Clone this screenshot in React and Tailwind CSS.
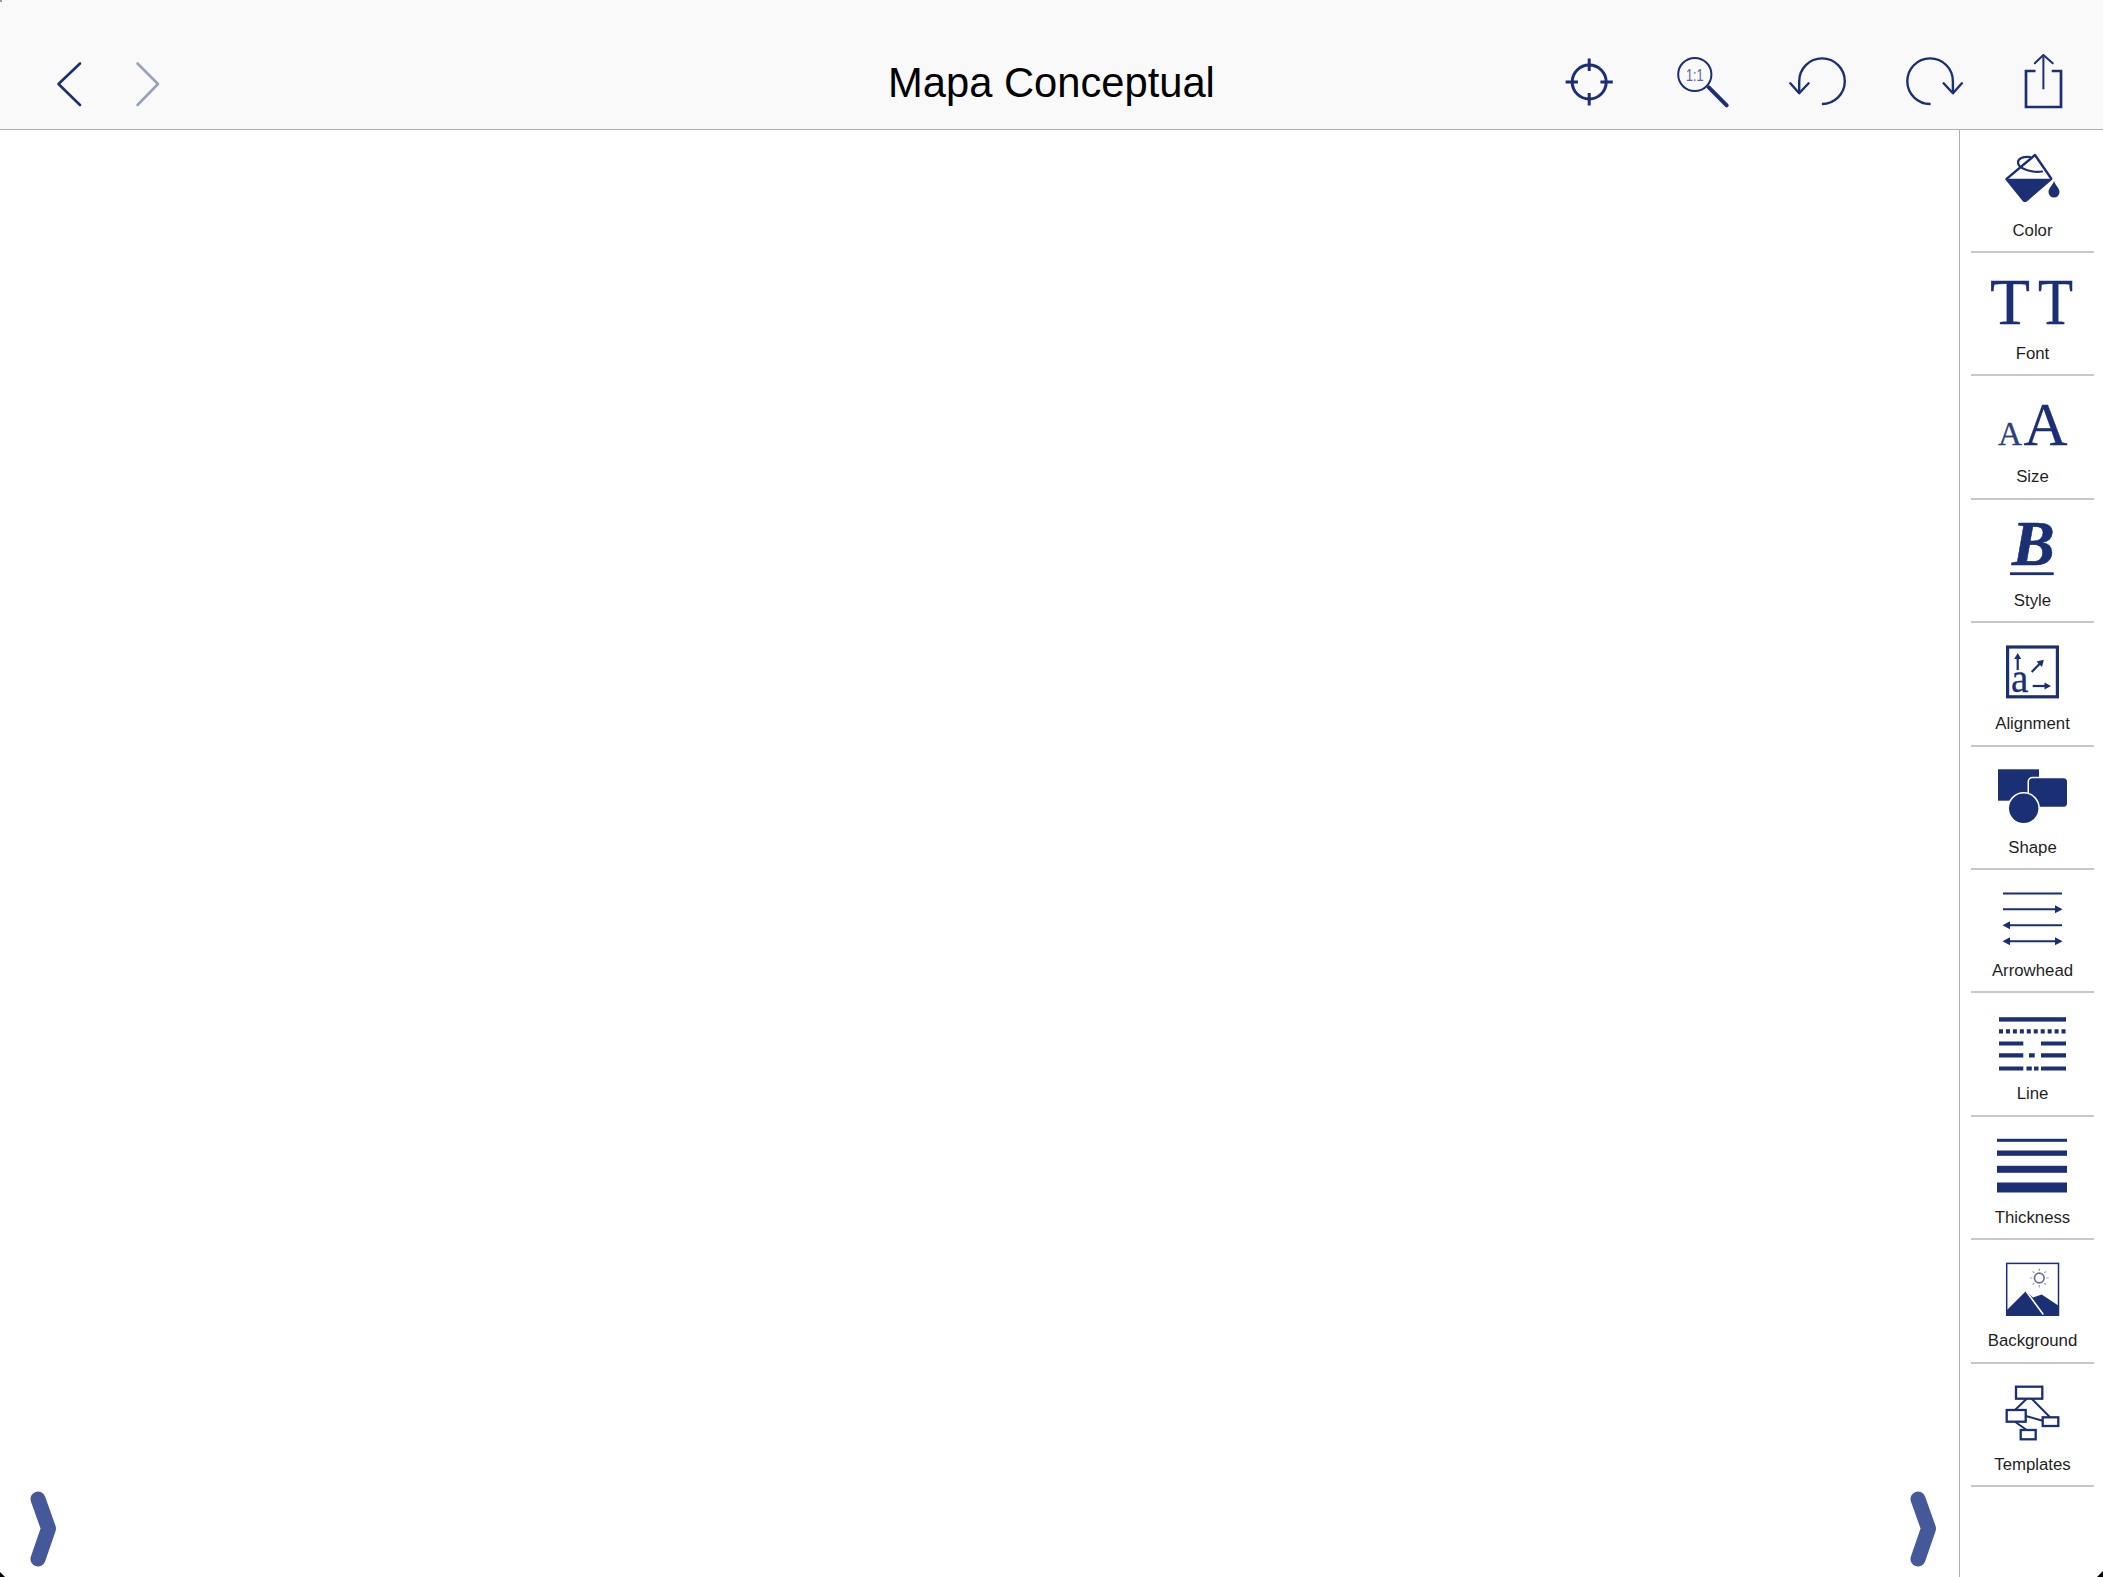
const NAVY = '#1b2f74';

const Icon = ({ children }) => (
  <svg viewBox="0 1 123 89" className="block w-[123px] h-[89px] shrink-0" fill="none">
    {children}
  </svg>
);

const serif = '"Liberation Serif", serif';
const sans = '"Liberation Sans", sans-serif';

const tools = [
  {
    label: 'Color',
    icon: (
      <>
        <path d="M35 50.3 L64 26 L80.7 50.3" stroke={NAVY} strokeWidth="2.4" strokeLinejoin="round" />
        <path d="M35 50.3 H80.7 L55.5 72 Q54 73 52.5 72 Z" fill={NAVY} stroke={NAVY} strokeWidth="1.2" strokeLinejoin="round" />
        <path d="M71 42.5 C62 44 47 40 47 33.5 C47 30 52 27 59 28" stroke={NAVY} strokeWidth="2.2" strokeLinecap="round" />
        <path d="M83 52 C84 56 88.5 59 88.5 63 A5.5 5.5 0 0 1 77.5 63 C77.5 59 82 56 83 52 Z" fill={NAVY} />
      </>
    ),
  },
  {
    label: 'Font',
    icon: (
      <>
        <text x="19" y="72" fontFamily={serif} fontSize="66" fill={NAVY} stroke={NAVY} strokeWidth="0.4" textLength="40" lengthAdjust="spacingAndGlyphs">T</text>
        <text x="67" y="72" fontFamily={serif} fontSize="66" fill={NAVY} stroke={NAVY} strokeWidth="0.4" textLength="35" lengthAdjust="spacingAndGlyphs">T</text>
      </>
    ),
  },
  {
    label: 'Size',
    icon: (
      <>
        <text x="27" y="70" fontFamily={serif} fontSize="33" fill="#2c3e7d" stroke="#2c3e7d" strokeWidth="0.3" textLength="24" lengthAdjust="spacingAndGlyphs">A</text>
        <text x="52.5" y="70" fontFamily={serif} fontSize="61" fill={NAVY} stroke={NAVY} strokeWidth="0.3" textLength="44" lengthAdjust="spacingAndGlyphs">A</text>
      </>
    ),
  },
  {
    label: 'Style',
    icon: (
      <>
        <text x="41" y="66" fontFamily={serif} fontSize="64" fontWeight="700" fontStyle="italic" fill={NAVY} stroke={NAVY} strokeWidth="0.6">B</text>
        <rect x="39" y="73.3" width="43.7" height="2.8" fill={NAVY} />
      </>
    ),
  },
  {
    label: 'Alignment',
    icon: (
      <>
        <rect x="36.6" y="25" width="49.8" height="49.8" stroke={NAVY} strokeWidth="3.2" />
        <text x="40" y="69.5" fontFamily={serif} fontSize="39" fill={NAVY} stroke={NAVY} strokeWidth="0.3">a</text>
        <path d="M46.7 48 V34" stroke={NAVY} strokeWidth="2.2" />
        <path d="M43.2 37 L46.7 31 L50.2 37 Z" fill={NAVY} />
        <path d="M60.7 50 L69.5 41" stroke={NAVY} strokeWidth="2.2" />
        <path d="M65.5 39.5 L72.8 37.7 L71 45 Z" fill={NAVY} />
        <path d="M61.7 64 H75" stroke={NAVY} strokeWidth="2.2" />
        <path d="M73.5 60.5 L80 64 L73.5 67.5 Z" fill={NAVY} />
      </>
    ),
  },
  {
    label: 'Shape',
    icon: (
      <>
        <rect x="27" y="23.3" width="41" height="31.4" fill={NAVY} />
        <rect x="58" y="32.3" width="38" height="28.4" rx="3.5" fill={NAVY} stroke="white" strokeWidth="3" paintOrder="stroke" />
        <circle cx="52.7" cy="62.3" r="14.7" fill={NAVY} stroke="white" strokeWidth="3" paintOrder="stroke" />
      </>
    ),
  },
  {
    label: 'Arrowhead',
    icon: (
      <>
        <path d="M32 24.6 H91 M32 40.3 H87 M36 56.3 H91 M36 72.3 H87" stroke={NAVY} strokeWidth="2" />
        <path d="M84 36.3 L91.5 40.3 L84 44.3 Z M39 52.3 L31.5 56.3 L39 60.3 Z M39 68.3 L31.5 72.3 L39 76.3 Z M84 68.3 L91.5 72.3 L84 76.3 Z" fill={NAVY} />
      </>
    ),
  },
  {
    label: 'Line',
    icon: (
      <>
        <rect x="28" y="25.2" width="67" height="4.4" fill={NAVY} />
        <path d="M28 39.4 H95" stroke={NAVY} strokeWidth="4.2" strokeDasharray="4 2.95" />
        <path d="M28 51.5 H52.3 M70 51.5 H95 M28 63.3 H52.3 M58 63.3 H63.7 M70 63.3 H95 M28 76.5 H52.3 M55.5 76.5 H60.8 M63 76.5 H67.5 M70 76.5 H95" stroke={NAVY} strokeWidth="4.2" />
      </>
    ),
  },
  {
    label: 'Thickness',
    icon: (
      <>
        <rect x="26" y="22.8" width="70" height="3" fill={NAVY} />
        <rect x="26" y="34.5" width="70" height="5.3" fill={NAVY} />
        <rect x="26" y="49.8" width="70" height="7" fill={NAVY} />
        <rect x="26" y="66.5" width="70" height="10" fill={NAVY} />
      </>
    ),
  },
  {
    label: 'Background',
    icon: (
      <>
        <rect x="35.7" y="24.4" width="51.8" height="51.8" stroke={NAVY} strokeWidth="1.5" />
        <circle cx="68.3" cy="39" r="4.8" stroke="#5f70a3" strokeWidth="1.7" />
        <path d="M68.3 29.5 V32 M68.3 46 V48.5 M58.8 39 H61.3 M75.3 39 H77.8 M61.6 32.3 L63.3 34 M73.3 44 L75 45.7 M75 32.3 L73.3 34 M63.3 44 L61.6 45.7" stroke="#9aa5c5" strokeWidth="1.2" />
        <path d="M35 72 L55 52 L62 58.5 L70.7 55.4 L88 67 V76.4 H35 Z" fill={NAVY} />
        <path d="M55 52 L72.3 75.4" stroke="white" strokeWidth="1.6" />
      </>
    ),
  },
  {
    label: 'Templates',
    icon: (
      <>
        <path d="M55.7 35.7 L44 47 M60.7 35.7 L79 54.3 M54.7 53 L71.7 57.7 M44 58.7 L55.7 67" stroke={NAVY} strokeWidth="2" />
        <rect x="45" y="23.7" width="26.3" height="12" fill="white" stroke={NAVY} strokeWidth="2.3" />
        <rect x="35.7" y="47" width="19" height="11.7" fill="white" stroke={NAVY} strokeWidth="2.3" />
        <rect x="71.7" y="54.3" width="15.6" height="8.7" fill="white" stroke={NAVY} strokeWidth="2.3" />
        <rect x="49.7" y="67" width="15" height="9.3" fill="white" stroke={NAVY} strokeWidth="2.3" />
      </>
    ),
  },
];

const Chevron = () => (
  <svg viewBox="0 0 32 83" className="block w-[32px] h-[83px]" fill="none">
    <path d="M10 12 L20.5 41.5 L10 72" stroke="#45589a" strokeWidth="15" strokeLinecap="round" strokeLinejoin="round" />
  </svg>
);

const App = () => {
  return (
    <div className="relative w-[2103px] h-[1577px] flex flex-col bg-white overflow-hidden" style={{ fontFamily: sans }}>
      {/* Top bar */}
      <header className="h-[129.6px] shrink-0 bg-[#f9f9f9] border-b border-[#b0b0b0] grid grid-cols-[1fr_auto_1fr] pt-[45px] items-start">
        <div className="flex pl-[56px] gap-[53px] pt-[16px]">
          <svg viewBox="0 0 26 46" className="block w-[26px] h-[46px]" fill="none">
            <path d="M24 2.5 L2.5 23 L24 44" stroke={NAVY} strokeWidth="2.6" strokeLinecap="round" strokeLinejoin="round" />
          </svg>
          <svg viewBox="0 0 26 46" className="block w-[26px] h-[46px]" fill="none">
            <path d="M2.5 2.5 L23 23 L2.5 44" stroke="#9aa1bd" strokeWidth="2.6" strokeLinecap="round" strokeLinejoin="round" />
          </svg>
        </div>
        <h1 className="text-[41.7px] leading-[70px] pt-[3px] font-normal text-black">Mapa Conceptual</h1>
        <div className="flex justify-end pr-[7px]">
          <svg viewBox="0 0 106 70" className="block w-[106px] h-[70px] shrink-0" fill="none">
            <circle cx="53.2" cy="37" r="17" stroke={NAVY} strokeWidth="3" />
            <path d="M53.2 13.4 V26 M53.2 48 V60.6 M29.6 37 H42 M64.4 37 H76.8" stroke={NAVY} strokeWidth="3" />
          </svg>
          <svg viewBox="0 0 126 70" className="block w-[126px] h-[70px] shrink-0" fill="none">
            <circle cx="52.8" cy="29.5" r="16.6" stroke={NAVY} strokeWidth="2" />
            <text x="52.8" y="35.5" textAnchor="middle" fontFamily={sans} fontSize="16" fill="#5a6795" textLength="17.5" lengthAdjust="spacingAndGlyphs">1:1</text>
            <path d="M66.8 42.3 L84.7 60.3" stroke={NAVY} strokeWidth="4" strokeLinecap="round" />
          </svg>
          <svg viewBox="0 0 109 70" className="block w-[109px] h-[70px] shrink-0" fill="none">
            <path d="M53.9 59 A22.8 22.8 0 1 0 31.2 36.2 V47" stroke={NAVY} strokeWidth="2.4" />
            <path d="M22.3 38.3 L31.2 48.3 L40.6 38.3" stroke={NAVY} strokeWidth="2.4" strokeLinecap="round" strokeLinejoin="round" />
          </svg>
          <svg viewBox="0 0 113 70" className="block w-[113px] h-[70px] shrink-0" fill="none">
            <path d="M53.6 59 A22.8 22.8 0 1 1 75.9 36.2 V47" stroke={NAVY} strokeWidth="2.4" />
            <path d="M66.6 38.3 L75.9 48.3 L84.9 38.3" stroke={NAVY} strokeWidth="2.4" strokeLinecap="round" strokeLinejoin="round" />
          </svg>
          <svg viewBox="0 0 106 70" className="block w-[106px] h-[70px] shrink-0" fill="none">
            <path d="M45.5 26 H36 V62 H71 V26 H61.7" stroke={NAVY} strokeWidth="2.7" />
            <path d="M53.4 11.5 V44.3" stroke={NAVY} strokeWidth="2" />
            <path d="M44.8 18.3 L53.4 10 L62.7 18.3" stroke={NAVY} strokeWidth="2" strokeLinecap="round" strokeLinejoin="round" />
          </svg>
        </div>
      </header>

      <div className="flex-1 flex min-h-0">
        {/* Canvas */}
        <main className="flex-1 flex items-end justify-between pl-[28px] pr-[19px] pb-[7px]">
          <Chevron />
          <Chevron />
        </main>

        {/* Tool sidebar */}
        <aside className="w-[144px] shrink-0 border-l border-[#b0b0b0] pl-[11px] pr-[9px]">
          {tools.map((tool) => (
            <div key={tool.label} className="h-[123.4px] border-b-2 border-[#c8c8c8] flex flex-col items-center">
              <Icon>{tool.icon}</Icon>
              <span className="text-[16.8px] leading-[23px] text-[#1f1f1f]">{tool.label}</span>
            </div>
          ))}
        </aside>
      </div>

      {/* Screen corners */}
      <div className="absolute left-0 top-0 w-[2px] h-[2px] bg-[#999999]" />
      <svg viewBox="0 0 5 5" className="absolute left-0 bottom-0 w-[5px] h-[5px]">
        <path d="M0 0 L5 5 H0 Z" fill="black" />
      </svg>
      <svg viewBox="0 0 6 6" className="absolute right-0 bottom-0 w-[6px] h-[6px]">
        <path d="M6 0 V6 H0 Z" fill="black" />
      </svg>
    </div>
  );
};

export default App;
